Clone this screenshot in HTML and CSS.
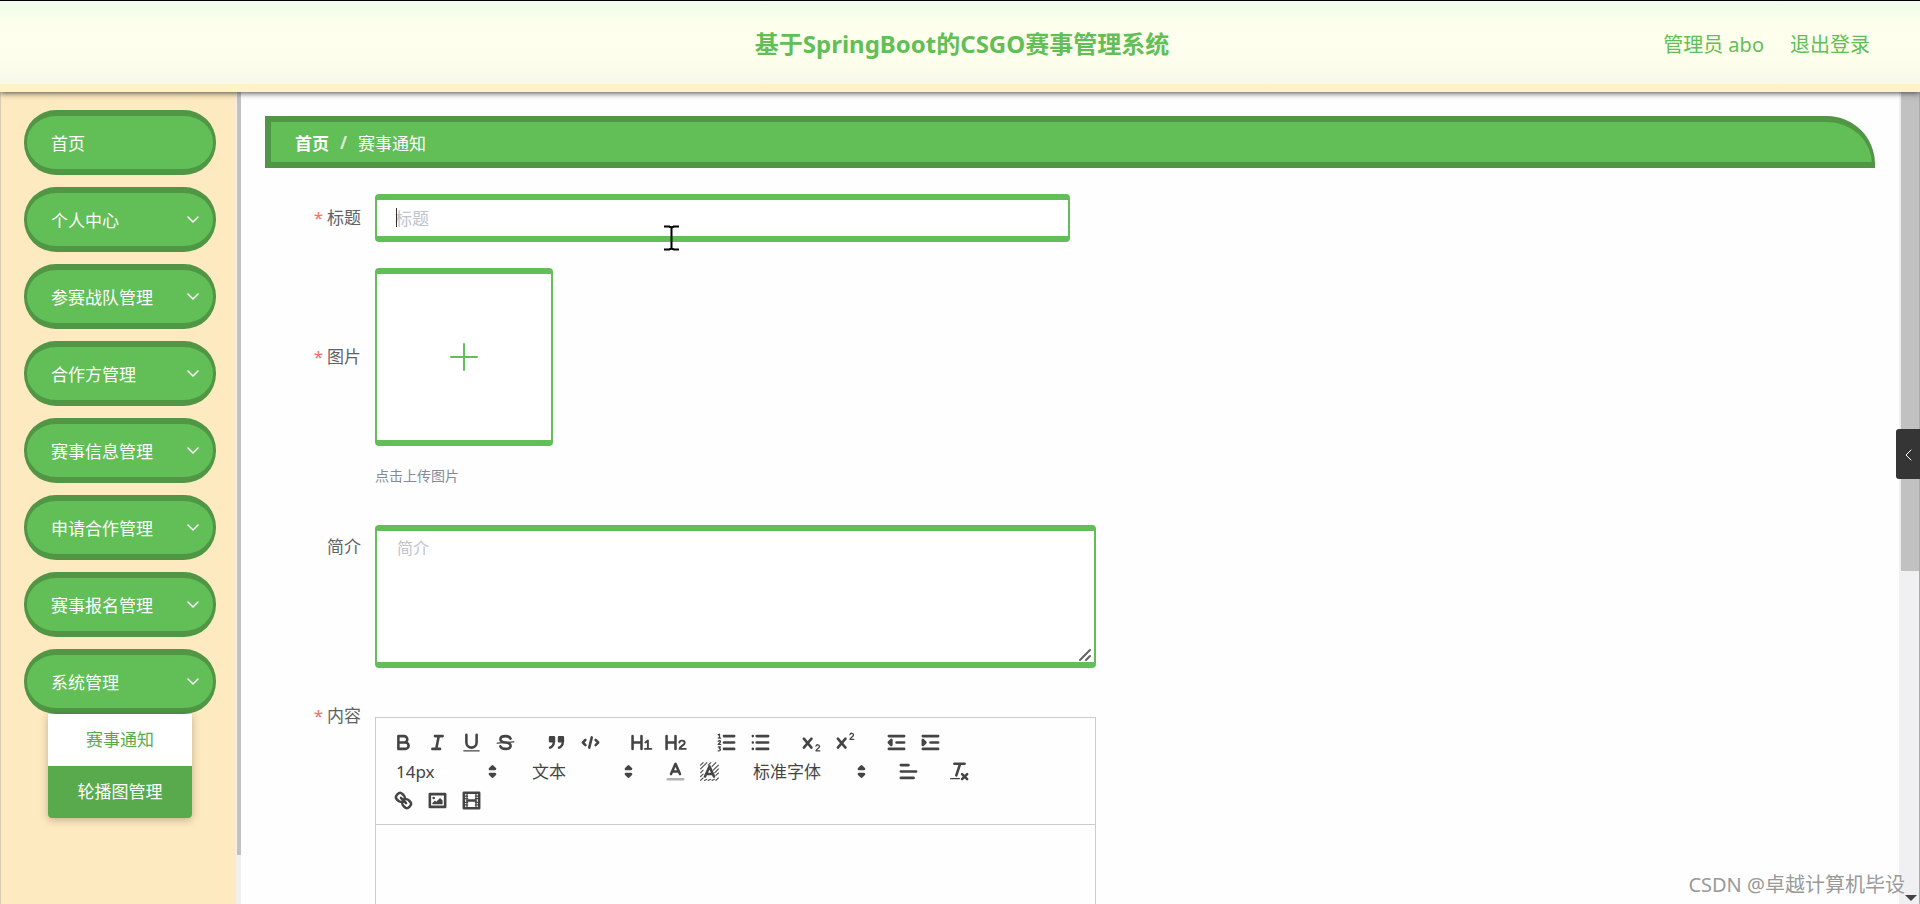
FILE: index.html
```html
<!DOCTYPE html>
<html lang="zh-CN">
    <head>
        <meta charset="UTF-8">
        <meta name="viewport" content="width=device-width, initial-scale=1.0">
        <title>基于SpringBoot的CSGO赛事管理系统</title>
        <link rel="stylesheet" href="styles.css">
    </head>
    <body>
        <header class="header">
            <h1 class="title">基于SpringBoot的CSGO赛事管理系统</h1>
            <div class="user">
                <span>管理员 abo</span>
                <a href="#">退出登录</a>
            </div>
        </header>

        <div class="container">
            <nav class="sidebar">
                <a class="menu-item" href="#">首页</a>
                <button class="menu-item" type="button">个人中心<svg class="arrow" viewBox="0 0 12 8"><path d="M1 1l5 5 5-5"/></svg></button>
                <button class="menu-item" type="button">参赛战队管理<svg class="arrow" viewBox="0 0 12 8"><path d="M1 1l5 5 5-5"/></svg></button>
                <button class="menu-item" type="button">合作方管理<svg class="arrow" viewBox="0 0 12 8"><path d="M1 1l5 5 5-5"/></svg></button>
                <button class="menu-item" type="button">赛事信息管理<svg class="arrow" viewBox="0 0 12 8"><path d="M1 1l5 5 5-5"/></svg></button>
                <button class="menu-item" type="button">申请合作管理<svg class="arrow" viewBox="0 0 12 8"><path d="M1 1l5 5 5-5"/></svg></button>
                <button class="menu-item" type="button">赛事报名管理<svg class="arrow" viewBox="0 0 12 8"><path d="M1 1l5 5 5-5"/></svg></button>
                <div class="menu-group">
                    <button class="menu-item" type="button">系统管理<svg class="arrow" viewBox="0 0 12 8"><path d="M1 1l5 5 5-5"/></svg></button>
                    <div class="submenu">
                        <a class="active" href="#">赛事通知</a>
                        <a href="#">轮播图管理</a>
                    </div>
                </div>
            </nav>
            <div class="side-scroll"><div class="side-thumb"></div></div>

            <main class="main">
                <div class="breadcrumb">
                    <a href="#">首页</a>
                    <span class="separator">/</span>
                    <span>赛事通知</span>
                </div>

                <form class="form">
                    <div class="form-item">
                        <label class="label required" for="biaoti">标题</label>
                        <div class="input-box">
                            <input class="input" id="biaoti" type="text" placeholder="标题">
                            <span class="caret"></span>
                            <svg class="pointer" viewBox="0 0 15 26"><path d="M0 1.5h6M9 1.5h6M0 24.5h6M9 24.5h6M7.5 2v22M5 1.5l2.5 1 2.500-1M5 24.500l2.500-1 2.500 1"/></svg>
                        </div>
                    </div>
                    <div class="form-item">
                        <label class="label required label-upload" for="tupian">图片</label>
                        <div>
                            <button class="upload" id="tupian" type="button" aria-label="图片">
                                <svg viewBox="0 0 28 28"><path d="M14 1v26M1 14h26"/></svg>
                            </button>
                            <p class="tip">点击上传图片</p>
                        </div>
                    </div>
                    <div class="form-item">
                        <label class="label label-text" for="jianjie">简介</label>
                        <div class="textarea-box">
                            <textarea class="textarea" id="jianjie" placeholder="简介"></textarea>
                            <svg class="resizer" viewBox="0 0 14 14"><path d="M2 12L12 2M8 12l4-4"/></svg>
                        </div>
                    </div>
                    <div class="form-item">
                        <label class="label required label-text" for="neirong">内容</label>
                        <div class="editor">
                            <div class="toolbar">
                                <span class="formats">
                                    <button type="button" aria-label="bold"><svg viewBox="0 0 18 18"><path d="M5 4h4.500a2.500 2.500 0 0 1 0 5H5zM5 9h5.500a2.500 2.500 0 0 1 0 5H5z"/></svg></button>
                                    <button type="button" aria-label="italic"><svg viewBox="0 0 18 18"><path d="M7 4h6M5 14h6M8 14l2-10"/></svg></button>
                                    <button type="button" aria-label="underline"><svg viewBox="0 0 18 18"><path d="M5 3v6a4 4 0 0 0 8 0V3"/><path class="thin" d="M3 15.500h12"/></svg></button>
                                    <button type="button" aria-label="strike"><svg viewBox="0 0 18 18"><path d="M13 6C12.500 4.700 11 4 9 4 6.700 4 5 5 5 6.500S6.500 8.700 9 9s4 1 4 2.500S11.300 14 9 14s-3.600-.8-4-2"/><path class="thin" d="M2.500 9.500l13-1"/></svg></button>
                                </span>
                                <span class="formats">
                                    <button type="button" aria-label="blockquote"><svg viewBox="0 0 18 18"><path class="solid" d="M4 5h3v3H4zM11 5h3v3h-3z"/><path d="M7 8c0 4-3 5-3 5M14 8c0 4-3 5-3 5"/></svg></button>
                                    <button type="button" aria-label="code"><svg viewBox="0 0 18 18"><path d="M5 7L3 9l2 2M13 7l2 2-2 2M10 5L8 13"/></svg></button>
                                </span>
                                <span class="formats">
                                    <button type="button" aria-label="header 1"><svg viewBox="0 0 18 18"><path d="M2 4v10M9 4v10M2 9h7"/><path class="mid" d="M12 9l2-1.500V14M11.700 14h5"/></svg></button>
                                    <button type="button" aria-label="header 2"><svg viewBox="0 0 18 18"><path d="M2 4v10M9 4v10M2 9h7"/><path class="mid" d="M12 9c.3-2 4.200-2 4.200.3 0 1.700-4 2.700-4 4.700h4.800"/></svg></button>
                                </span>
                                <span class="formats">
                                    <button type="button" aria-label="ordered list"><svg viewBox="0 0 18 18"><path d="M7 4h8M7 9h8M7 14h8"/><path class="thin" d="M2.500 3l1-.5v3M2.500 5.500h2M2.500 8c1-1 2-.3 1.700.6L2.500 10.500h2M2.500 12.500h1.700l-.9 1.300c1.500 0 1.300 2-.8 1.700"/></svg></button>
                                    <button type="button" aria-label="bullet list"><svg viewBox="0 0 18 18"><path d="M6 4h9M6 9h9M6 14h9M3 4h.01M3 9h.01M3 14h.01"/></svg></button>
                                </span>
                                <span class="formats">
                                    <button type="button" aria-label="subscript"><svg viewBox="0 0 18 18"><path d="M3 6l6 7M9 6l-6 7"/><path class="thin" d="M12.500 11.800c.4-1.500 2.800-1.300 2.800.2 0 1.500-2.800 2.200-2.800 3.500h3"/></svg></button>
                                    <button type="button" aria-label="superscript"><svg viewBox="0 0 18 18"><path d="M3 6l6 7M9 6l-6 7"/><path class="thin" d="M12.500 2.800c.4-1.500 2.800-1.300 2.800.2 0 1.500-2.800 2.200-2.800 3.500h3"/></svg></button>
                                </span>
                                <span class="formats">
                                    <button type="button" aria-label="outdent"><svg viewBox="0 0 18 18"><path d="M3 4h12M3 14h12M9 9h6"/><path class="solid" d="M5 7v4L3 9z"/></svg></button>
                                    <button type="button" aria-label="indent"><svg viewBox="0 0 18 18"><path d="M3 4h12M3 14h12M9 9h6"/><path class="solid" d="M3 7v4l2-2z"/></svg></button>
                                </span>
                                <span class="break"></span>
                                <span class="picker">
                                    <select aria-label="字号"><option>14px</option></select>
                                    <svg viewBox="0 0 18 18"><path class="solid" d="M7 11l2 2 2-2zM7 7l2-2 2 2z"/></svg>
                                </span>
                                <span class="picker">
                                    <select aria-label="标题格式"><option>文本</option></select>
                                    <svg viewBox="0 0 18 18"><path class="solid" d="M7 11l2 2 2-2zM7 7l2-2 2 2z"/></svg>
                                </span>
                                <span class="formats">
                                    <button type="button" aria-label="color"><svg viewBox="0 0 18 18"><path class="pale" d="M3 15h12"/><path d="M5.500 11L9 3l3.500 8M11.600 9H6.400"/></svg></button>
                                    <button type="button" aria-label="background"><svg viewBox="0 0 18 18"><path class="hatch" d="M2 4l2-2M2 7l5-5M2 10l2-2M2 13l2-2M2 16l2-2M5 16l2-1M8 16l2-1M11 16l2-1M14 16l2-2M16 10l-2 2M16 7l-3 3M16 4l-4 4M14 2l-3 3M10 2L8 4"/><path d="M5.500 13L9 5l3.500 8M11.600 11H6.400"/></svg></button>
                                </span>
                                <span class="picker picker-font">
                                    <select aria-label="字体"><option>标准字体</option></select>
                                    <svg viewBox="0 0 18 18"><path class="solid" d="M7 11l2 2 2-2zM7 7l2-2 2 2z"/></svg>
                                </span>
                                <span class="formats">
                                    <button type="button" aria-label="align"><svg viewBox="0 0 18 18"><path d="M3 4h6M3 9h12M3 14h10"/></svg></button>
                                </span>
                                <span class="formats">
                                    <button type="button" aria-label="clean"><svg viewBox="0 0 18 18"><path d="M5 3h8M6.500 12l3-9M11 11l4 4M15 11l-4 4"/><path class="thin" d="M2 14.500h7"/></svg></button>
                                </span>
                                <span class="break"></span>
                                <span class="formats">
                                    <button type="button" aria-label="link"><svg viewBox="0 0 18 18"><path d="M7 7l4 4M8.900 4.600a3.500 3.500 0 0 1 .4 4.700 3.500 3.500 0 0 1-4.700-.4C3.200 7.500 2 6.400 4.200 4.200s3.300-1 4.700.4zM13.400 9.100a3.500 3.500 0 0 0-4.700-.4 3.500 3.500 0 0 0 .4 4.700c1.400 1.400 2.500 2.600 4.700.4s1-3.300-.4-4.700z"/></svg></button>
                                    <button type="button" aria-label="image"><svg viewBox="0 0 18 18"><path d="M3 4h12v10H3z"/><circle class="fill" cx="6" cy="7" r="1"/><path class="fill" d="M5 12v-1l2-2 1 1 3-3 2 2v3z"/></svg></button>
                                    <button type="button" aria-label="video"><svg viewBox="0 0 18 18"><path d="M3 3h12v12H3z"/><path class="thin" d="M5.500 3v12M12.500 3v12M3 5.500h3M3 7.500h3M3 10.500h3M3 12.500h3M12 5.500h3M12 7.500h3M12 10.500h3M12 12.500h3"/><path d="M6 9h6"/></svg></button>
                                </span>
                            </div>
                            <textarea class="editor-body" id="neirong"></textarea>
                        </div>
                    </div>
                </form>
            </main>
            <div class="main-scroll">
                <div class="main-thumb"></div>
            </div>
        </div>

        <button class="drawer" type="button" aria-label="展开"><svg viewBox="0 0 8 12"><path d="M7 1L2 6l5 5"/></svg></button>
        <div class="watermark">CSDN @卓越计算机毕设</div>
        <div class="scroll-down"></div>
    </body>
</html>
```

FILE: styles.css
```css
*{
    margin: 0;
    padding: 0;
    box-sizing: border-box;
}

body{
    display: flex;
    flex-direction: column;
    position: relative;
    height: 100vh;
    overflow: hidden;
    font-family: "Noto Sans", "Noto Sans CJK SC", sans-serif;
    font-size: 17px;
    color: #606266;
    background: #fefefe;
}

button, input, textarea, select{
    font: inherit;
    color: inherit;
    border: none;
    background: none;
    outline: none;
}

a{
    color: inherit;
    text-decoration: none;
}

svg{
    fill: none;
    stroke: currentColor;
    stroke-linecap: round;
    stroke-linejoin: round;
}

/* header */
.header{
    display: grid;
    grid-template-columns: 1fr auto 1fr;
    align-items: center;
    flex: none;
    position: relative;
    z-index: 1;
    height: 92px;
    padding: 0 50px 0 54px;
    color: #62be56;
    background: linear-gradient(#effdea, #fdffec 30%, #fefeec 70%, #f8f8e8);
    border-top: 1px solid #000;
    border-bottom: 8px solid #fdf3c4;
    box-shadow: 0 1px 6px #444;
}

.title{
    grid-column: 2;
    font-size: 24px;
    line-height: 36px;
    padding-top: 2px;
}

.user{
    display: flex;
    justify-content: flex-end;
    gap: 26px;
    padding-top: 2px;
    font-size: 20px;
}

/* sidebar */
.container{
    display: flex;
    flex: 1;
    min-height: 0;
}

.sidebar{
    display: flex;
    flex-direction: column;
    gap: 12px;
    flex: none;
    width: 236px;
    padding: 18px 20px 0 23px;
    background: #feeac0;
    border-left: 1px solid #d9ccb0;
}

.menu-item{
    display: flex;
    align-items: center;
    justify-content: space-between;
    width: 100%;
    height: 65px;
    padding: 0 14px 0 24px;
    color: #fff;
    text-align: left;
    background: #62be56;
    border: solid #509645;
    border-width: 6px 3px;
    border-radius: 32px;
    cursor: pointer;
}

.arrow{
    width: 12px;
    height: 8px;
    stroke-width: 1.5;
}

.submenu{
    width: 144px;
    margin: 0 auto;
    border-radius: 0 0 4px 4px;
    overflow: hidden;
    box-shadow: 0 2px 8px rgba(0, 0, 0, 0.25);
}

.submenu a{
    display: block;
    line-height: 52px;
    text-align: center;
    color: #fff;
    background: #58aa4d;
}

.submenu .active{
    color: #58aa4d;
    background: #fff;
}

.side-scroll{
    flex: none;
    width: 5px;
    background: #f0f0f0;
}

.side-thumb{
    height: 94%;
    margin-left: 1px;
    background: #c1c1c1;
}

/* content */
.main{
    flex: 1;
    min-width: 0;
    padding: 24px;
    overflow: hidden;
}

.breadcrumb{
    display: flex;
    align-items: center;
    gap: 11px;
    height: 52px;
    margin-bottom: 26px;
    padding: 0 24px;
    color: #fff;
    background: #62be56;
    border: 6px solid #509645;
    border-right-width: 3px;
    border-radius: 0 48px 0 0;
}

.breadcrumb a{
    font-weight: 700;
}

.separator{
    font-weight: 700;
    color: #d8ead8;
}

.form-item{
    display: flex;
    align-items: flex-start;
    margin-bottom: 26px;
}

.label{
    flex: none;
    width: 110px;
    padding-right: 14px;
    line-height: 48px;
    text-align: right;
}

.required::before{
    content: "*";
    margin-right: 4px;
    color: #f56c6c;
}

.label-upload{
    line-height: 178px;
}

.label-text{
    line-height: 44px;
}

.input-box{
    position: relative;
    width: 695px;
}

.input{
    display: block;
    width: 100%;
    height: 48px;
    padding: 0 18px;
    background: #fff;
    border: solid #62be56;
    border-width: 6px 2px;
    border-radius: 4px;
}

.input::placeholder, .textarea::placeholder{
    color: #c0c4cc;
}

.caret{
    position: absolute;
    left: 21px;
    top: 14px;
    width: 1px;
    height: 19px;
    background: #333;
}

.pointer{
    position: absolute;
    left: 289px;
    top: 31px;
    width: 15px;
    height: 26px;
    color: #000;
    stroke-width: 2;
    stroke-linecap: butt;
}

.upload{
    display: flex;
    align-items: center;
    justify-content: center;
    width: 178px;
    height: 178px;
    color: #62be56;
    background: #fff;
    border: solid #62be56;
    border-width: 6px 2px;
    border-radius: 4px;
    cursor: pointer;
}

.upload svg{
    width: 28px;
    height: 28px;
    stroke-width: 2;
}

.tip{
    margin: 18px 0 11px;
    font-size: 14px;
    line-height: 24px;
    color: #858a99;
}

.textarea-box{
    position: relative;
    width: 721px;
}

.textarea{
    display: block;
    width: 100%;
    height: 143px;
    padding: 4px 20px;
    font-size: 16px;
    background: #fff;
    border: solid #62be56;
    border-width: 6px 2px;
    border-radius: 4px;
    resize: none;
}

.resizer{
    position: absolute;
    right: 4px;
    bottom: 6px;
    width: 14px;
    height: 14px;
    stroke-width: 2;
}

/* editor */
.editor{
    width: 721px;
    margin-top: 23px;
    border: 1px solid #ccc;
}

.toolbar{
    display: flex;
    flex-wrap: wrap;
    column-gap: 17px;
    padding: 10px 10px 9px;
    color: #444;
    border-bottom: 1px solid #ccc;
}

.formats{
    display: flex;
}

.formats button{
    display: flex;
    align-items: center;
    justify-content: center;
    width: 34px;
    height: 29px;
    cursor: pointer;
}

.toolbar svg{
    width: 23px;
    height: 23px;
    stroke-width: 2;
}

.toolbar .thin{
    stroke-width: 1;
}

.toolbar .mid{
    stroke-width: 1.5;
}

.toolbar .hatch{
    stroke-width: 0.8;
}

.toolbar .pale{
    opacity: 0.4;
}

.toolbar .solid{
    fill: currentColor;
}

.toolbar .fill{
    fill: currentColor;
    stroke: none;
}

.break{
    flex-basis: 100%;
}

.picker{
    position: relative;
    width: 119px;
    height: 29px;
}

.picker-font{
    width: 131px;
}

.picker select{
    width: 100%;
    height: 100%;
    padding-left: 10px;
    appearance: none;
}

.picker svg{
    position: absolute;
    right: 1px;
    top: 3px;
    pointer-events: none;
}

.editor-body{
    display: block;
    width: 100%;
    height: 400px;
    padding: 12px 15px;
    resize: none;
}

/* page scrollbar */
.main-scroll{
    flex: none;
    width: 21px;
    padding-left: 2px;
    background: #f0eff2;
    border-right: 1px solid #aaa;
}

.main-thumb{
    height: 59%;
    background: #c1c1c1;
}

.drawer{
    position: absolute;
    right: 0;
    top: 429px;
    width: 24px;
    height: 50px;
    color: #fff;
    background: #353535;
    border-radius: 3px 0 0 3px;
    z-index: 2;
    cursor: pointer;
}

.drawer svg{
    width: 8px;
    height: 12px;
}

.watermark{
    position: absolute;
    right: 15px;
    bottom: 4px;
    font-size: 20px;
    line-height: 30px;
    color: #999;
    text-shadow: -1px -1px 0 #fff;
}

.scroll-down{
    position: absolute;
    right: 3px;
    bottom: 3px;
    border: 6px solid transparent;
    border-top-color: #444;
    border-bottom: none;
}
```
